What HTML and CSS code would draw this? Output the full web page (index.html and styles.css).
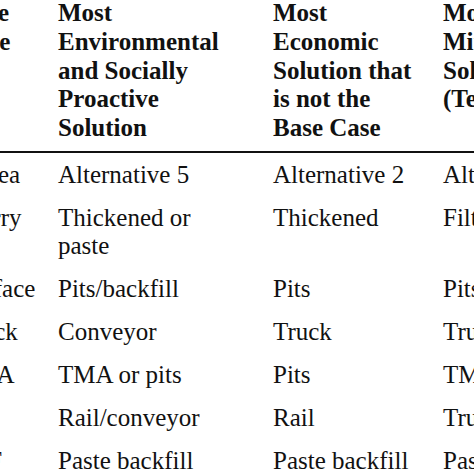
FILE: index.html
```html
<!DOCTYPE html>
<html lang="en">
<head>
<meta charset="utf-8">
<title>Alternatives comparison</title>
<link rel="stylesheet" href="styles.css">
</head>
<body>
<table class="alts">
  <colgroup>
    <col class="c-base">
    <col class="c-env">
    <col class="c-eco">
    <col class="c-min">
  </colgroup>
  <thead>
    <tr>
      <th>Base Case</th>
      <th>Most Environmental and Socially Proactive Solution</th>
      <th>Most Economic Solution that is not the Base Case</th>
      <th>Most Minimal Solution (Technical)</th>
    </tr>
  </thead>
  <tbody>
    <tr><td>Korea</td><td>Alternative 5</td><td>Alternative 2</td><td>Alternative 4</td></tr>
    <tr><td>Slurry</td><td>Thickened or paste</td><td>Thickened</td><td>Filtered</td></tr>
    <tr><td>Surface</td><td>Pits/backfill</td><td>Pits</td><td>Pits</td></tr>
    <tr><td>Truck</td><td>Conveyor</td><td>Truck</td><td>Truck</td></tr>
    <tr><td>TMA</td><td>TMA or pits</td><td>Pits</td><td>TMA</td></tr>
    <tr><td></td><td>Rail/conveyor</td><td>Rail</td><td>Truck</td></tr>
    <tr><td>TSF</td><td>Paste backfill</td><td>Paste backfill</td><td>Paste backfill</td></tr>
  </tbody>
</table>
</body>
</html>
```

FILE: styles.css
```css
html, body {
  margin: 0;
  padding: 0;
  overflow: hidden;
  background: #ffffff;
}

body {
  font-family: "Liberation Serif", "Times New Roman", serif;
  font-size: 25px;
  color: #111111;
}

.alts {
  border-collapse: collapse;
  table-layout: fixed;
  width: 654px;
  margin-top: -1px;
  margin-left: -41px;
}

.c-base { width: 99px; }
.c-env { width: 215px; }
.c-eco { width: 170px; }
.c-min { width: 170px; }

.alts th {
  font-weight: bold;
  text-align: left;
  vertical-align: top;
  line-height: 28.75px;
  padding: 0 25px 8px 0;
  border-bottom: 2px solid #111111;
}

.alts th:first-child { padding-right: 35px; }
.alts th:nth-child(2) { padding-right: 35px; }

.alts td {
  font-weight: normal;
  text-align: left;
  vertical-align: top;
  line-height: 28px;
  padding: 8px 25px 7px 0;
  white-space: normal;
}

.alts td:first-child { padding-right: 35px; white-space: nowrap; }
.alts td:nth-child(2) { padding-right: 35px; }
```
